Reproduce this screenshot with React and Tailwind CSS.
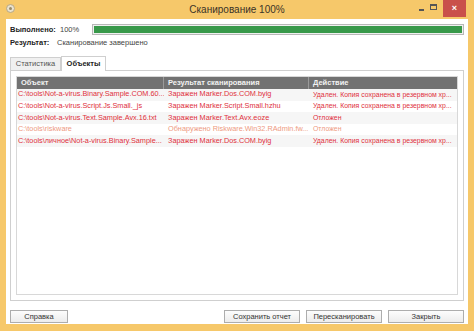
import React from "react";

const rows = [
  ["C:\\tools\\Not-a-virus.Binary.Sample.COM.60...", "Заражен Marker.Dos.COM.byig", "Удален. Копия сохранена в резервном хр...", false],
  ["C:\\tools\\Not-a-virus.Script.Js.Small._js", "Заражен Marker.Script.Small.hzhu", "Удален. Копия сохранена в резервном хр...", false],
  ["C:\\tools\\Not-a-virus.Text.Sample.Avx.16.txt", "Заражен Marker.Text.Avx.eoze", "Отложен", false],
  ["C:\\tools\\riskware", "Обнаружено Riskware.Win32.RAdmin.fw...", "Отложен", true],
  ["C:\\tools\\личное\\Not-a-virus.Binary.Sample...", "Заражен Marker.Dos.COM.byig", "Удален. Копия сохранена в резервном хр...", false],
];

function Btn({ children, w }) {
  return (
    <div className={`h-[13px] ${w} border border-[#adadad] bg-gradient-to-b from-[#fdfdfd] to-[#ececec] flex items-center justify-center text-[7.5px] text-[#333]`}>
      {children}
    </div>
  );
}

export default function App() {
  return (
    <div
      className="w-[474px] h-[331px] bg-[#f6c86a] flex flex-col overflow-hidden"
      style={{ fontFamily: '"Liberation Sans", Arial, sans-serif' }}
    >
      {/* title bar */}
      <div className="h-[19px] relative flex items-center justify-center shrink-0">
        <div className="absolute left-[6px] top-[4px] w-[9px] h-[9px] rounded-full bg-[#e9e2cf] border border-[#b9a882] flex items-center justify-center">
          <div className="w-[3px] h-[3px] rounded-full bg-[#9a8a66]" />
        </div>
        <span className="text-[10px] text-[#3a3328] mt-[-1px]">Сканирование 100%</span>
        <div className="absolute left-[419px] top-[9px] w-[5px] h-[2px] bg-[#555]" />
        <div className="absolute left-[430px] top-[4px] w-[7px] h-[6px] border border-[#555] border-t-2" />
        <div className="absolute left-[443px] top-0 w-[23px] h-[17px] bg-[#c9504b] flex items-center justify-center text-white text-[9px] font-bold leading-none">
          ×
        </div>
      </div>

      {/* client */}
      <div className="flex-1 mx-[6px] mb-[7px] bg-white flex flex-col px-[4px] pt-[5px]">
        <div className="flex items-center h-[11px]">
          <span className="text-[7.5px] font-bold text-[#222] w-[50px]">Выполнено:</span>
          <span className="text-[7.5px] text-[#444] w-[32px]">100%</span>
          <div className="flex-1 h-[11px] border border-[#b8b8b8] bg-[#f0f0f0] p-[1px]">
            <div className="h-full w-full bg-[#38994a]" />
          </div>
        </div>
        <div className="flex items-center h-[12px] mt-[2px]">
          <span className="text-[7.5px] font-bold text-[#222] w-[47px]">Результат:</span>
          <span className="text-[7.5px] text-[#444]">Сканирование завершено</span>
        </div>

        {/* tabs */}
        <div className="flex items-end mt-[6px] h-[15px]">
          <div className="h-[13px] w-[51px] bg-[#f0f0f0] border border-[#cfcfcf] border-b-0 flex items-center justify-center text-[7.5px] text-[#555]">
            Статистика
          </div>
          <div className="h-[15px] w-[45px] bg-white border border-[#cfcfcf] border-b-0 flex items-center justify-center text-[7.5px] font-bold text-[#222] -mb-[1px] relative z-10">
            Объекты
          </div>
        </div>
        <div className="h-[231px] border border-[#cfcfcf] p-[5px] flex flex-col">
          <div className="flex-1 border border-[#d8d8d8] flex flex-col">
            <div className="h-[12px] bg-[#727272] flex text-[7.5px] text-[#f2f2f2] font-bold">
              <div className="w-[147px] pl-[4px] flex items-center border-r border-[#9a9a9a]">Объект</div>
              <div className="w-[145px] pl-[4px] flex items-center border-r border-[#9a9a9a]">Результат сканирования</div>
              <div className="flex-1 pl-[4px] flex items-center">Действие</div>
            </div>
            {rows.map((r, i) => (
              <div
                key={i}
                className={`h-[11.6px] flex items-center text-[7.3px] whitespace-nowrap ${i % 2 === 0 ? "bg-[#f6f6f6]" : "bg-white"} ${r[3] ? "text-[#ee9a82]" : "text-[#e0303c]"}`}
              >
                <div className="w-[147px] pl-[1px] overflow-hidden">{r[0]}</div>
                <div className="w-[145px] pl-[4px] overflow-hidden">{r[1]}</div>
                <div className="flex-1 pl-[4px] overflow-hidden text-[6.9px]">{r[2]}</div>
              </div>
            ))}
          </div>
        </div>

        {/* buttons */}
        <div className="flex mt-[9px]">
          <Btn w="w-[58px]">Справка</Btn>
          <div className="flex-1" />
          <div className="flex gap-[6px]">
            <Btn w="w-[76px]">Сохранить отчет</Btn>
            <Btn w="w-[76px]">Пересканировать</Btn>
            <Btn w="w-[76px]">Закрыть</Btn>
          </div>
        </div>
      </div>
    </div>
  );
}
